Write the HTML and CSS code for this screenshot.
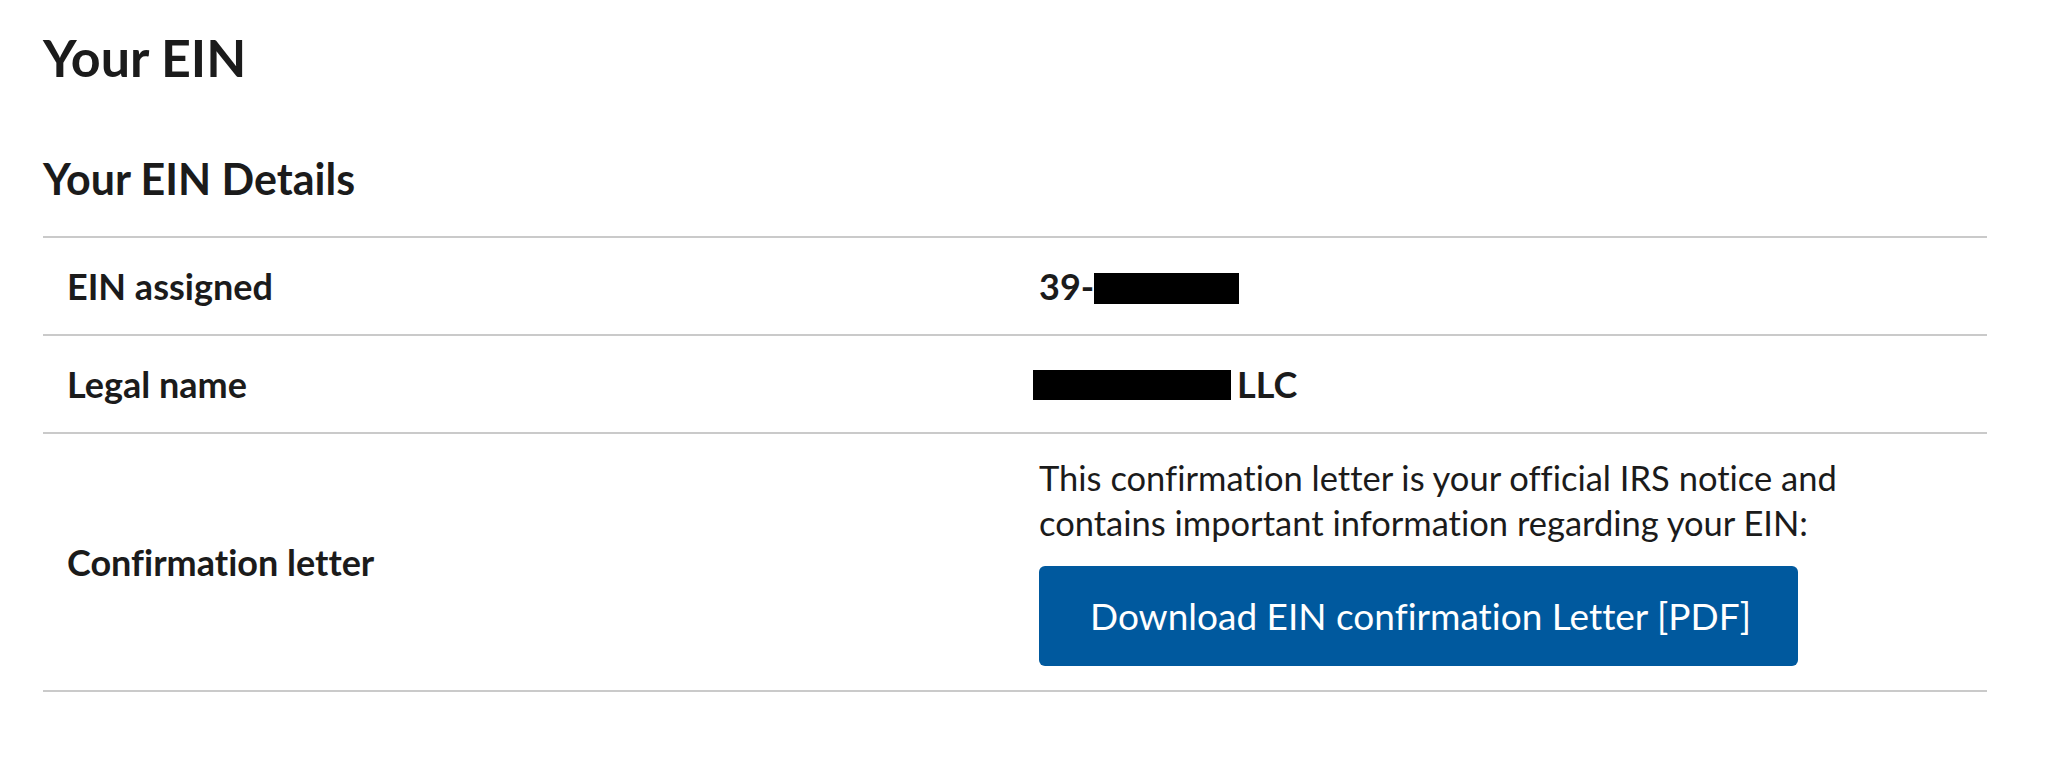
FILE: index.html
```html
<!DOCTYPE html>
<html lang="en">
<head>
<meta charset="utf-8">
<title>Your EIN</title>
<link rel="stylesheet" href="styles.css">
</head>
<body>
<main class="page">
  <h1 class="title">Your EIN</h1>
  <h2 class="subtitle">Your EIN Details</h2>
  <table class="details">
    <colgroup>
      <col class="col-label">
      <col class="col-value">
    </colgroup>
    <tbody>
      <tr>
        <th class="label" scope="row">EIN assigned</th>
        <td class="value strong">39-<span class="redact redact-ein"></span></td>
      </tr>
      <tr>
        <th class="label" scope="row">Legal name</th>
        <td class="value strong"><span class="redact redact-name"></span>LLC</td>
      </tr>
      <tr>
        <th class="label" scope="row">Confirmation letter</th>
        <td class="value">
          <p class="note">This confirmation letter is your official IRS notice and contains important information regarding your EIN:</p>
          <a class="button" href="#">Download EIN confirmation Letter [PDF]</a>
        </td>
      </tr>
    </tbody>
  </table>
</main>
</body>
</html>
```
FILE: styles.css
```css
html, body {
  margin: 0;
  padding: 0;
  background: #ffffff;
}

body {
  font-family: Lato, "Source Sans Pro", "Open Sans", sans-serif;
  color: #1b1b1b;
  font-variant-ligatures: no-common-ligatures;
}

.page {
  padding: 0 61px 0 43px;
}

.title {
  font-size: 52px;
  line-height: 61px;
  font-weight: 700;
  margin: 27px 0 0 0;
}

.subtitle {
  font-size: 43px;
  line-height: 50px;
  font-weight: 700;
  margin: 66px 0 0 0;
}

.details {
  width: 100%;
  margin-top: 32px;
  border-collapse: collapse;
  border-top: 2px solid #cacaca;
  table-layout: fixed;
}

.col-label,
.col-value {
  width: 50%;
}

.details tr {
  border-bottom: 2px solid #cacaca;
}

.label,
.value {
  padding: 24px 24px;
  font-size: 36px;
  line-height: 48px;
  vertical-align: middle;
  text-align: left;
}

.label {
  font-weight: 700;
}

.strong {
  font-weight: 700;
}

.redact {
  display: inline-block;
  background: #000000;
  vertical-align: -4px;
}

.redact-ein {
  width: 145px;
  height: 31px;
}

.redact-name {
  width: 198px;
  height: 30px;
  margin-right: 6px;
  margin-left: -6px;
  vertical-align: -2px;
}

.note {
  margin: -3px 0 0 0;
  font-size: 34.5px;
  line-height: 45px;
  max-width: 820px;
}

.button {
  display: inline-flex;
  align-items: center;
  height: 100px;
  padding: 0 47px 0 51px;
  margin-top: 21px;
  background: #00599e;
  color: #ffffff;
  text-decoration: none;
  border-radius: 6px;
  font-size: 37px;
  font-weight: 400;
}
```
